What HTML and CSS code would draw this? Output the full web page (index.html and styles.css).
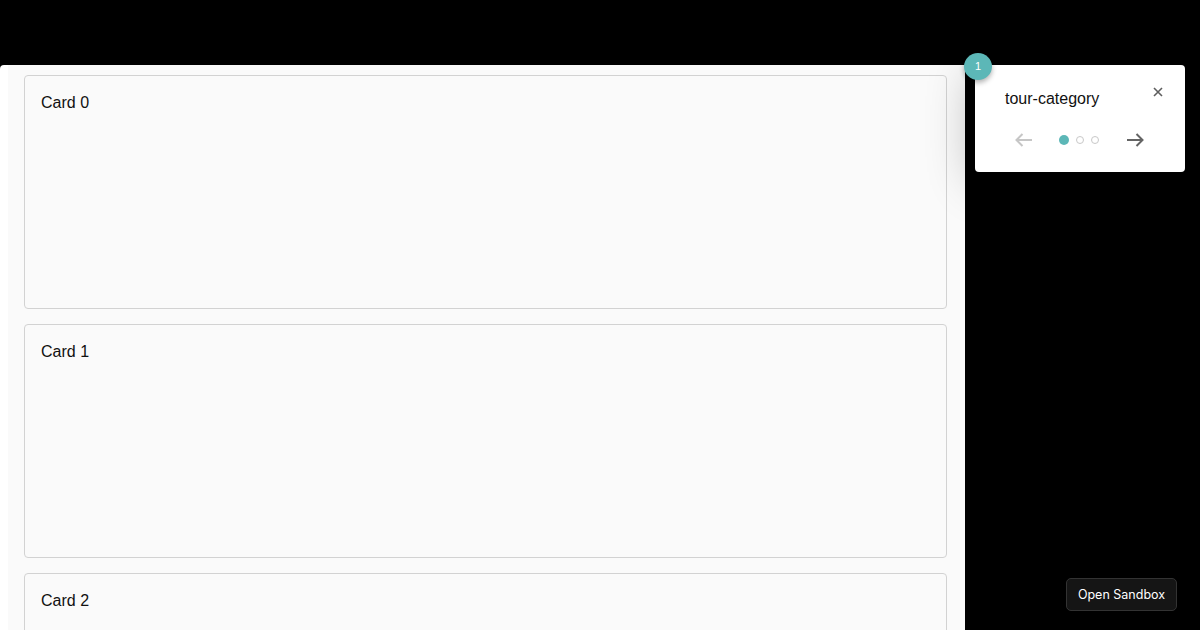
FILE: index.html
```html
<!DOCTYPE html>
<html>
<head>
<meta charset="utf-8">
<link rel="stylesheet" href="styles.css">
</head>
<body>
<div class="stage">
  <div class="highlight">
    <div class="list">
      <div class="card">Card 0</div>
      <div class="card">Card 1</div>
      <div class="card">Card 2</div>
    </div>
  </div>
</div>

<div class="popover">
  <div class="badge">1</div>
  <button class="close" aria-label="Close">
    <svg width="10" height="10" viewBox="0 0 10 10"><path d="M1 1L9 9M9 1L1 9" stroke="#5e5e5e" stroke-width="1.6" fill="none"/></svg>
  </button>
  <div class="title">tour-category</div>
  <div class="nav">
    <button class="arrow">
      <svg width="18" height="14" viewBox="0 0 18 14"><path d="M17 7H1.5M7.5 1L1.5 7L7.5 13" stroke="#c6c6c6" stroke-width="2" fill="none"/></svg>
    </button>
    <div class="dots">
      <span class="dot active"></span>
      <span class="dot"></span>
      <span class="dot"></span>
    </div>
    <button class="arrow">
      <svg width="18" height="14" viewBox="0 0 18 14"><path d="M1 7H16.5M10.5 1L16.5 7L10.5 13" stroke="#646464" stroke-width="2" fill="none"/></svg>
    </button>
  </div>
</div>

<button class="sandbox">Open Sandbox</button>
</body>
</html>
```

FILE: styles.css
```css
html, body {
  margin: 0;
  padding: 0;
  background: #000;
  height: 630px;
  overflow: hidden;
  font-family: "Liberation Sans", Arial, sans-serif;
}

.stage {
  padding-top: 65px;
  display: flex;
}

.highlight {
  width: 965px;
  height: 565px;
  background: #fff;
  border-top-left-radius: 4px;
  padding-left: 8px;
  box-sizing: border-box;
  overflow: hidden;
}

.list {
  background: #fafafa;
  height: 100%;
  padding: 10px 18px 0 16px;
  display: flex;
  flex-direction: column;
  gap: 15px;
}

.card {
  flex: 0 0 auto;
  height: 234px;
  box-sizing: border-box;
  border: 1px solid #d2d2d2;
  border-radius: 4px;
  background: #fafafa;
  padding: 17px 16px 16px;
  font-size: 16px;
  line-height: 19px;
  color: #111;
}

.popover {
  position: absolute;
  left: 975px;
  top: 65px;
  width: 210px;
  height: 107px;
  box-sizing: border-box;
  background: #fff;
  border-radius: 4px;
  padding: 24px 30px;
  box-shadow: 0 0.5em 3em rgba(0, 0, 0, 0.3);
  color: #111;
}

.badge {
  position: absolute;
  left: -11px;
  top: -12px;
  width: 28px;
  height: 27px;
  border-radius: 50%;
  background: #5cb7b7;
  color: #fff;
  font-size: 11px;
  line-height: 27px;
  text-align: center;
  box-shadow: 0 0.25em 0.5em rgba(0, 0, 0, 0.3);
}

.close {
  position: absolute;
  right: 21px;
  top: 21px;
  width: 12px;
  height: 12px;
  padding: 0;
  border: 0;
  background: none;
  display: flex;
  align-items: center;
  justify-content: center;
}

.title {
  font-size: 16px;
  line-height: 19px;
}

.nav {
  margin-top: 24px;
  display: flex;
  align-items: center;
  justify-content: space-between;
  height: 16px;
  padding: 0 11px 0 10px;
}

.arrow {
  border: 0;
  background: none;
  padding: 0;
  width: 18px;
  height: 14px;
  display: flex;
}

.dots {
  display: flex;
  align-items: center;
  gap: 7px;
  margin-right: 2px;
}

.dot {
  width: 6px;
  height: 6px;
  border: 1px solid #c8c8c8;
  border-radius: 50%;
  box-sizing: content-box;
}

.dot.active {
  width: 10px;
  height: 10px;
  border: 0;
  background: #5cb7b7;
}

.sandbox {
  position: absolute;
  left: 1066px;
  top: 578px;
  width: 111px;
  height: 33px;
  background: #151515;
  border: 1px solid #333;
  border-radius: 5px;
  color: #fff;
  font-family: Inter, "Liberation Sans", sans-serif;
  font-size: 12.5px;
  padding: 0;
}
```
